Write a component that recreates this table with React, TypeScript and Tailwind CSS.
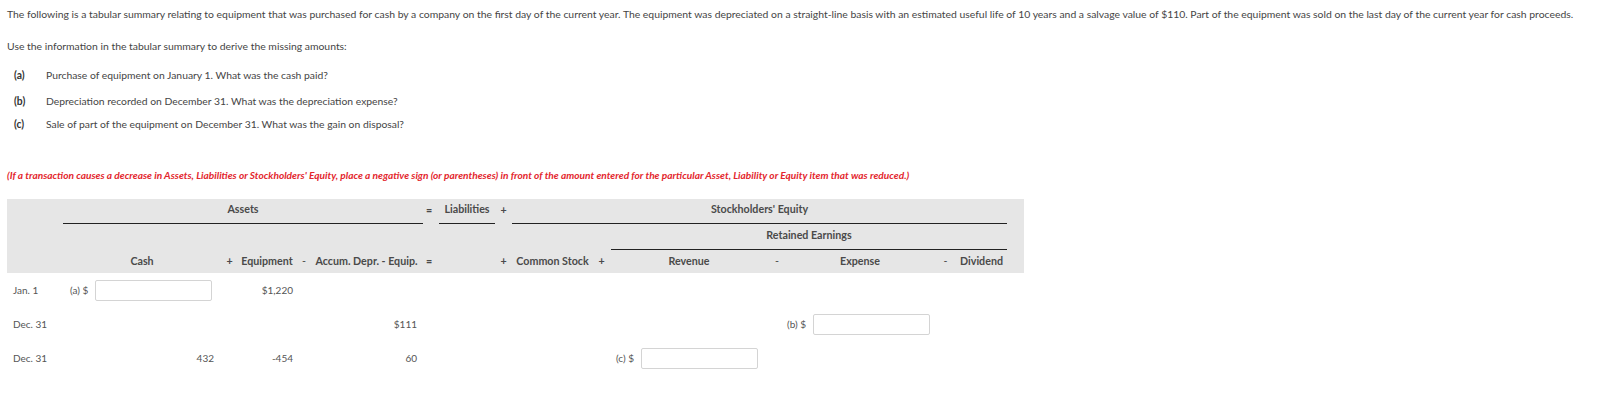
import React from "react";

const cols =
  "grid grid-cols-[56px_158px_17px_58px_16px_109px_16px_60px_13px_85px_13px_162px_14px_152px_19px_69px]";

function AnswerBox({ label }: { label: string }) {
  return (
    <div className="flex items-center gap-[7px]">
      <span>{label}</span>
      <input
        type="text"
        className="w-[117px] h-[21px] border border-[#d4d4d4] bg-white rounded-[2px] outline-none"
      />
    </div>
  );
}

const questions = [
  ["(a)", "Purchase of equipment on January 1. What was the cash paid?", "mt-0"],
  ["(b)", "Depreciation recorded on December 31. What was the depreciation expense?", "mt-[12px]"],
  ["(c)", "Sale of part of the equipment on December 31. What was the gain on disposal?", "mt-[9px]"],
];

export default function App() {
  return (
    <div className="bg-white w-[1600px] h-[396px] text-[10px] text-[#454545] font-['Lato','Liberation_Sans',sans-serif]">
      <div className="px-[7px] pt-[7px]">
        <p className="leading-[14px] text-[10.4px]">
          The following is a tabular summary relating to equipment that was purchased for cash by a company on the first day of the current year. The equipment was depreciated on a straight-line basis with an estimated useful life of 10 years and a salvage value of $110. Part of the equipment was sold on the last day of the current year for cash proceeds.
        </p>
        <p className="leading-[14px] mt-[18px] text-[10.4px]">Use the information in the tabular summary to derive the missing amounts:</p>

        <div className="mt-[15px] flex flex-col pl-[7px] text-[10.35px]">
          {questions.map(([k, q, m]) => (
            <div key={k} className={`flex leading-[14px] ${m}`}>
              <span className="w-[32px] font-bold text-[#333]">{k}</span>
              <span>{q}</span>
            </div>
          ))}
        </div>

        <p className="mt-[37px] leading-[14px] italic font-bold text-[10.15px] text-[#e3262d]">
          (If a transaction causes a decrease in Assets, Liabilities or Stockholders' Equity, place a negative sign (or parentheses) in front of the amount entered for the particular Asset, Liability or Equity item that was reduced.)
        </p>

        <div className="mt-[17px] w-[1017px] bg-[#e6e6e6] font-bold text-[10.7px] text-[#4a4a4a]">
          <div className={`${cols} h-[25px] items-end`}>
            <div />
            <div className="col-span-5">
              <div className="text-center border-b border-[#222] pb-[6px] mr-[-2px]">Assets</div>
            </div>
            <div className="text-center pb-[6px]">=</div>
            <div className="px-[2px]">
              <div className="text-center border-b border-[#222] pb-[6px]">Liabilities</div>
            </div>
            <div className="text-center pb-[6px]">+</div>
            <div className="col-span-7 pl-[2px] pr-[17px]">
              <div className="text-center border-b border-[#222] pb-[6px]">Stockholders' Equity</div>
            </div>
          </div>
          <div className={`${cols} h-[26px] items-end`}>
            <div className="col-start-12 col-span-5 pl-[3px] pr-[17px]">
              <div className="text-center border-b border-[#222] pb-[6px]">Retained Earnings</div>
            </div>
          </div>
          <div className={`${cols} h-[23px] items-center text-center`}>
            <div />
            <div>Cash</div>
            <div>+</div>
            <div>Equipment</div>
            <div className="font-normal">-</div>
            <div>Accum. Depr. - Equip.</div>
            <div>=</div>
            <div />
            <div>+</div>
            <div>Common Stock</div>
            <div>+</div>
            <div>Revenue</div>
            <div className="font-normal">-</div>
            <div>Expense</div>
            <div className="font-normal">-</div>
            <div className="text-left pl-[5px]">Dividend</div>
          </div>
        </div>

        <div className="w-[1017px] text-[#555]">
          <div className={`${cols} h-[34px] items-center`}>
            <div className="pl-[6px]">Jan. 1</div>
            <div className="pl-[7px]">
              <AnswerBox label="(a) $" />
            </div>
            <div />
            <div className="text-right pr-[3px]">$1,220</div>
          </div>
          <div className={`${cols} h-[34px] items-center`}>
            <div className="pl-[6px]">Dec. 31</div>
            <div className="col-start-6 text-right pr-[4px]">$111</div>
            <div className="col-start-14 pl-[3px]">
              <AnswerBox label="(b) $" />
            </div>
          </div>
          <div className={`${cols} h-[34px] items-center`}>
            <div className="pl-[6px]">Dec. 31</div>
            <div className="text-right pr-[7px]">432</div>
            <div />
            <div className="text-right pr-[3px]">-454</div>
            <div />
            <div className="text-right pr-[4px]">60</div>
            <div className="col-start-12 pl-[8px]">
              <AnswerBox label="(c) $" />
            </div>
          </div>
        </div>
      </div>
    </div>
  );
}
